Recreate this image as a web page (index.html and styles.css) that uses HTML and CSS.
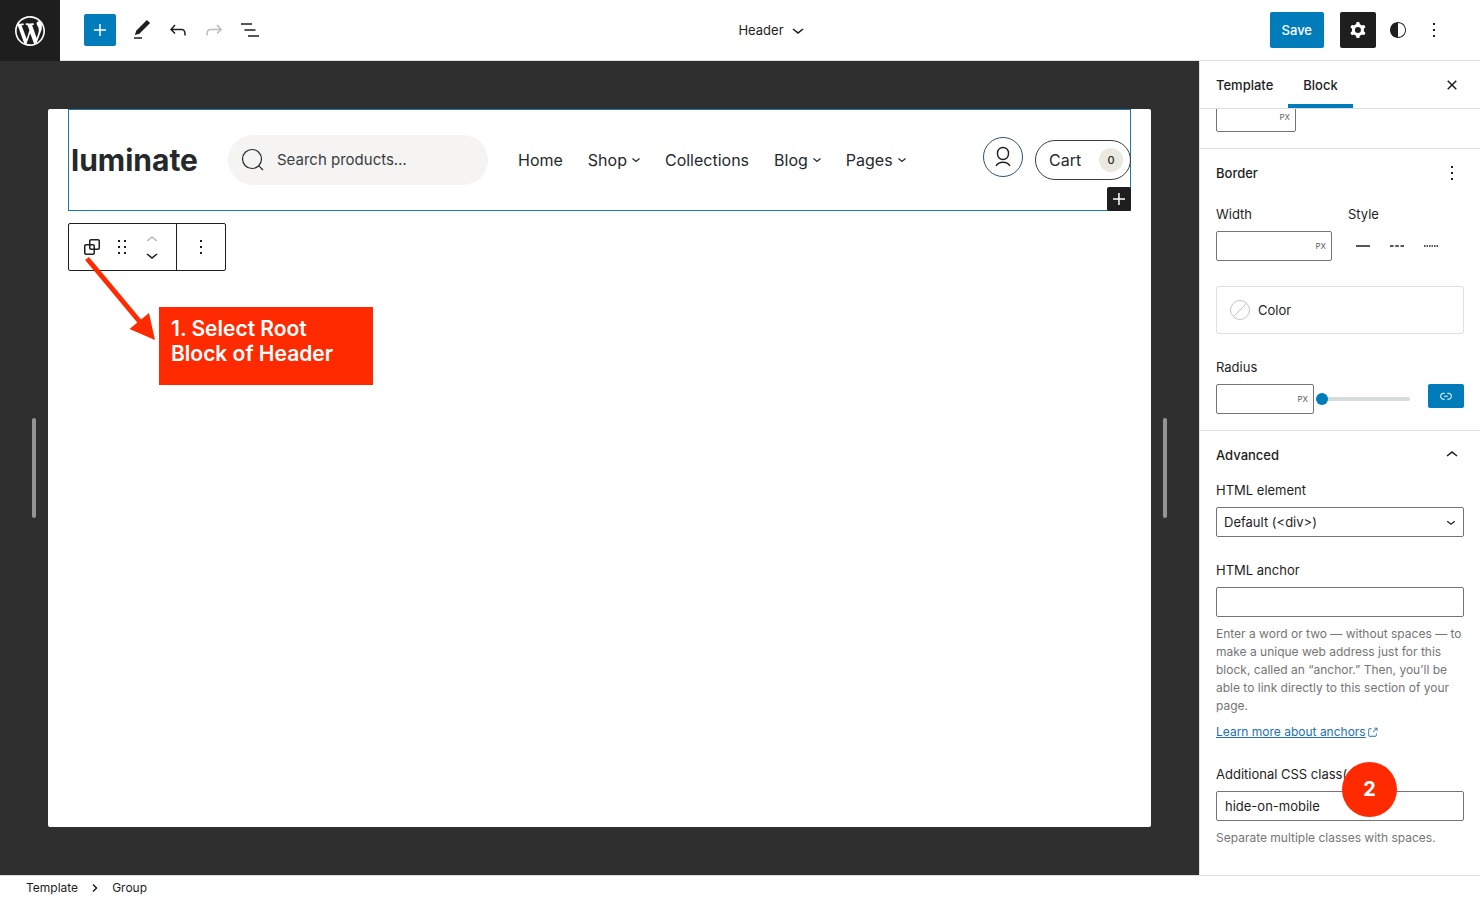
FILE: index.html
```html
<!DOCTYPE html>
<html lang="en">

<head>
    <meta charset="utf-8">
    <title>Header</title>
    <link rel="stylesheet" href="styles.css">
</head>

<body>
    <header class="topbar">
        <a class="site-logo" href="#" aria-label="WordPress">
            <svg width="36" height="36" viewBox="-2 -2 24 24"><path d="M20 10c0-5.51-4.49-10-10-10C4.48 0 0 4.49 0 10c0 5.52 4.48 10 10 10 5.51 0 10-4.48 10-10zM7.78 15.37L4.37 6.22c.55-.02 1.17-.08 1.17-.08.5-.06.44-1.13-.06-1.11 0 0-1.45.11-2.37.11-.18 0-.37 0-.58-.01C4.12 2.69 6.87 1.11 10 1.11c2.33 0 4.45.87 6.05 2.34-.68-.11-1.65.39-1.65 1.58 0 .74.45 1.36.9 2.1.35.61.55 1.36.55 2.46 0 1.49-1.4 5-1.4 5l-3.03-8.37c.54-.02.82-.17.82-.17.5-.05.44-1.25-.06-1.22 0 0-1.44.12-2.38.12-.87 0-2.33-.12-2.33-.12-.5-.03-.56 1.2-.06 1.22l.92.08 1.26 3.41zM17.41 10c.24-.64.74-1.87.43-4.25.7 1.29 1.05 2.71 1.05 4.25 0 3.29-1.73 6.24-4.4 7.78.97-2.59 1.94-5.2 2.92-7.78zM6.1 18.09C3.12 16.65 1.11 13.53 1.11 10c0-1.3.23-2.48.72-3.59C3.25 10.3 4.67 14.2 6.1 18.09zm4.03-6.63l2.58 6.98c-.86.29-1.76.45-2.71.45-.79 0-1.57-.11-2.29-.33.81-2.38 1.62-4.74 2.42-7.1z"/></svg>
        </a>
        <div class="topbar-inner">
            <div class="tools">
                <button class="inserter" aria-label="Add block">
                    <svg class="icon" viewBox="0 0 24 24"><path d="M11.2 12.8V18h1.5v-5.2H18v-1.5h-5.3V6h-1.5v5.3H6v1.5z"/></svg>
                </button>
                <button class="tool" aria-label="Tools">
                    <svg class="icon" viewBox="0 0 24 24"><path d="M20.1 5.1L16.9 2 6.2 12.7l-1.3 4.4 4.5-1.3L20.1 5.1zM4 20.8h8v-1.5H4v1.5z"/></svg>
                </button>
                <button class="tool" aria-label="Undo">
                    <svg class="icon" viewBox="0 0 24 24"><path d="M18.3 11.7c-.6-.6-1.4-.9-2.3-.9H6.7l2.9-3.3-1.1-1-4.5 5L8.5 16l1-1-2.7-2.7H16c.5 0 .9.2 1.3.5 1 1 1 3.4 1 4.5v.3h1.5v-.2c0-1.5 0-4.3-1.5-5.7z"/></svg>
                </button>
                <button class="tool" aria-label="Redo" disabled>
                    <svg class="icon" viewBox="0 0 24 24"><path d="M15.6 6.5l-1.1 1 2.9 3.3H8c-.9 0-1.7.3-2.3.9-1.4 1.5-1.4 4.2-1.4 5.6v.2h1.5v-.3c0-1.1 0-3.5 1-4.5.3-.3.7-.5 1.3-.5h9.2L14.5 15l1.1 1.1 4.6-4.6-4.6-5z"/></svg>
                </button>
                <button class="tool" aria-label="List view">
                    <svg class="icon" viewBox="0 0 24 24"><path d="M3 5.3h11v1.5H3V5.3zm3.5 6h11v1.5h-11v-1.5zM21 17.3H10v1.5h11v-1.5z"/></svg>
                </button>
            </div>
            <button class="document-title">
                Header
                <svg class="icon" viewBox="0 0 24 24"><path d="M17.5 11.6L12 16l-5.5-4.4.9-1.2L12 14l4.5-3.6 1 1.2z"/></svg>
            </button>
            <div class="actions">
                <button class="save">Save</button>
                <button class="tool active" aria-label="Settings">
                    <svg class="icon" viewBox="0 0 24 24"><path fill-rule="evenodd" d="M10.289 4.836A1 1 0 0111.275 4h1.306a1 1 0 01.987.836l.244 1.466c.787.26 1.503.679 2.108 1.218l1.393-.522a1 1 0 011.216.437l.653 1.13a1 1 0 01-.23 1.273l-1.148.944a6.025 6.025 0 010 2.435l1.149.946a1 1 0 01.23 1.272l-.653 1.13a1 1 0 01-1.216.437l-1.394-.522c-.605.54-1.32.958-2.108 1.218l-.244 1.466a1 1 0 01-.987.836h-1.306a1 1 0 01-.986-.836l-.244-1.466a5.995 5.995 0 01-2.108-1.218l-1.394.522a1 1 0 01-1.217-.436l-.653-1.131a1 1 0 01.23-1.272l1.149-.946a6.026 6.026 0 010-2.435l-1.148-.944a1 1 0 01-.23-1.272l.653-1.131a1 1 0 011.217-.437l1.393.522a5.994 5.994 0 012.108-1.218l.244-1.466zM14.929 12a3 3 0 11-6 0 3 3 0 016 0z"/></svg>
                </button>
                <button class="tool styles" aria-label="Styles">
                    <svg class="icon" viewBox="0 0 24 24"><path d="M12 4c-4.4 0-8 3.6-8 8s3.6 8 8 8 8-3.6 8-8-3.6-8-8-8zm0 15V5c3.9 0 7 3.1 7 7s-3.1 7-7 7z"/></svg>
                </button>
                <button class="tool" aria-label="Options">
                    <svg class="icon" viewBox="0 0 24 24"><path d="M13 19h-2v-2h2v2zm0-6h-2v-2h2v2zm0-6h-2V5h2v2z"/></svg>
                </button>
            </div>
        </div>
    </header>

    <main class="editor">
        <section class="canvas">
            <div class="handle"></div>
            <div class="frame">
                <div class="header-block">
                    <div class="brand">luminate</div>
                    <label class="search">
                        <svg width="24" height="24" viewBox="0 0 24 24"><circle cx="11" cy="11" r="9.5"/><path d="M17.8 17.8L22 22"/></svg>
                        <input type="search" placeholder="Search products…" aria-label="Search products">
                    </label>
                    <nav class="menu">
                        <a href="#">Home</a>
                        <a href="#">Shop <svg width="8" height="8" viewBox="0 0 8 8"><path d="M0.5 2.5L4 5.5l3.5-3"/></svg></a>
                        <a href="#">Collections</a>
                        <a href="#">Blog <svg width="8" height="8" viewBox="0 0 8 8"><path d="M0.5 2.5L4 5.5l3.5-3"/></svg></a>
                        <a href="#">Pages <svg width="8" height="8" viewBox="0 0 8 8"><path d="M0.5 2.5L4 5.5l3.5-3"/></svg></a>
                    </nav>
                    <div class="account-wrap">
                        <a class="account" href="#" aria-label="Account">
                            <svg width="20" height="22" viewBox="0 0 20 22"><rect x="4.5" y="1.5" width="11" height="12" rx="5.5"/><path d="M3 20c1.5-2.5 4-3.8 7-3.8s5.5 1.3 7 3.8"/></svg>
                        </a>
                    </div>
                    <button class="cart">Cart <span class="count">0</span></button>
                    <button class="appender" aria-label="Add block">
                        <svg class="icon" viewBox="0 0 24 24"><path d="M11.2 12.8V18h1.5v-5.2H18v-1.5h-5.3V6h-1.5v5.3H6v1.5z"/></svg>
                    </button>
                </div>

                <div class="block-toolbar">
                    <div class="toolbar-group">
                        <button aria-label="Group">
                            <svg class="icon" viewBox="0 0 24 24"><path d="M18 4h-7c-1.1 0-2 .9-2 2v3H6c-1.1 0-2 .9-2 2v7c0 1.1.9 2 2 2h7c1.1 0 2-.9 2-2v-3h3c1.1 0 2-.9 2-2V6c0-1.1-.9-2-2-2zm-4.5 14c0 .3-.2.5-.5.5H6c-.3 0-.5-.2-.5-.5v-7c0-.3.2-.5.5-.5h3V13c0 1.1.9 2 2 2h2.5v3zm0-4.5H11c-.3 0-.5-.2-.5-.5v-2.5H13c.3 0 .5.2.5.5v2.5zm5-.5c0 .3-.2.5-.5.5h-3V11c0-1.1-.9-2-2-2h-2.5V6c0-.3.2-.5.5-.5h7c.3 0 .5.2.5.5v7z"/></svg>
                        </button>
                        <button aria-label="Drag">
                            <svg class="icon" viewBox="0 0 24 24"><path d="M8 7h2V5H8v2zm0 6h2v-2H8v2zm0 6h2v-2H8v2zm6-14v2h2V5h-2zm0 8h2v-2h-2v2zm0 6h2v-2h-2v2z"/></svg>
                        </button>
                        <div class="movers">
                            <button aria-label="Move up" disabled>
                                <svg class="icon" viewBox="0 0 24 24"><path d="M6.5 12.4L12 8l5.5 4.4-.9 1.2L12 10l-4.5 3.6-1-1.2z"/></svg>
                            </button>
                            <button aria-label="Move down">
                                <svg class="icon" viewBox="0 0 24 24"><path d="M17.5 11.6L12 16l-5.5-4.4.9-1.2L12 14l4.5-3.6 1 1.2z"/></svg>
                            </button>
                        </div>
                    </div>
                    <div class="toolbar-group">
                        <button aria-label="Options">
                            <svg class="icon" viewBox="0 0 24 24"><path d="M13 19h-2v-2h2v2zm0-6h-2v-2h2v2zm0-6h-2V5h2v2z"/></svg>
                        </button>
                    </div>
                </div>

                <!-- annotation: arrow from the group icon to the note -->
                <svg class="arrow" width="80" height="94" viewBox="0 0 80 94"><path class="shaft" d="M7 8.5L60 72"/><path d="M69 63L75 90 49.5 79z"/></svg>
                <div class="note">1. Select Root<br>Block of Header</div>
            </div>
            <div class="handle"></div>
        </section>

        <aside class="sidebar">
            <div class="tabs">
                <button class="tab">Template</button>
                <button class="tab current">Block</button>
                <button class="close" aria-label="Close settings">
                    <svg class="icon" viewBox="0 0 24 24"><path d="M12 13.06l3.712 3.713 1.061-1.06L13.061 12l3.712-3.712-1.06-1.06L12 10.938 8.288 7.227l-1.061 1.06L10.939 12l-3.712 3.712 1.06 1.061L12 13.061z"/></svg>
                </button>
            </div>

            <div class="panels">
                <div class="panel scrolled">
                    <div class="unit-input gap-input">
                        <input type="text" aria-label="Block spacing">
                        <span>PX</span>
                    </div>
                </div>

                <div class="panel">
                    <div class="panel-title border-title">
                        <h2>Border</h2>
                        <button aria-label="Border options">
                            <svg class="icon" viewBox="0 0 24 24"><path d="M13 19h-2v-2h2v2zm0-6h-2v-2h2v2zm0-6h-2V5h2v2z"/></svg>
                        </button>
                    </div>
                    <div class="columns">
                        <div class="field">
                            <label for="border-width">Width</label>
                            <div class="unit-input">
                                <input type="text" id="border-width">
                                <span>PX</span>
                            </div>
                        </div>
                        <div class="field">
                            <span class="label">Style</span>
                            <div class="line-styles">
                                <button aria-label="Solid"><svg width="14" height="2" viewBox="0 0 14 2"><path d="M0 1h14"/></svg></button>
                                <button aria-label="Dashed"><svg width="14" height="2" viewBox="0 0 14 2"><path stroke-dasharray="3.5 1.75" d="M0 1h14"/></svg></button>
                                <button aria-label="Dotted"><svg width="14" height="2" viewBox="0 0 14 2"><path stroke-dasharray="1.5 1" d="M0 1h14"/></svg></button>
                            </div>
                        </div>
                    </div>
                    <button class="color">
                        <svg width="20" height="20" viewBox="0 0 20 20"><circle cx="10" cy="10" r="9.5"/><path d="M3.5 16.5l13-13"/></svg>
                        Color
                    </button>
                    <div class="field">
                        <label for="radius">Radius</label>
                        <div class="radius-row">
                            <div class="unit-input radius-input">
                                <input type="text" id="radius">
                                <span>PX</span>
                            </div>
                            <input class="slider" type="range" min="0" max="100" value="0" aria-label="Border radius">
                            <button class="link-sides" aria-label="Unlink radii">
                                <svg width="16" height="16" viewBox="0 0 24 24"><path d="M15.6 7.2H14v1.5h1.6c2 0 3.7 1.7 3.7 3.7s-1.7 3.7-3.7 3.7H14v1.5h1.6c2.8 0 5.2-2.3 5.2-5.2 0-2.9-2.3-5.2-5.2-5.2zM4.7 12.4c0-2 1.7-3.7 3.7-3.7H10V7.2H8.4c-2.9 0-5.2 2.3-5.2 5.2 0 2.9 2.3 5.2 5.2 5.2H10v-1.5H8.4c-2 0-3.7-1.7-3.7-3.7zm4.6.9h5.3v-1.5H9.3v1.5z"/></svg>
                            </button>
                        </div>
                    </div>
                </div>

                <div class="panel">
                    <div class="panel-title">
                        <h2>Advanced</h2>
                        <button aria-label="Collapse">
                            <svg class="icon" viewBox="0 0 24 24"><path d="M6.5 12.4L12 8l5.5 4.4-.9 1.2L12 10l-4.5 3.6-1-1.2z"/></svg>
                        </button>
                    </div>
                    <div class="field">
                        <label for="element">HTML element</label>
                        <div class="select">
                            <select id="element">
                                <option>Default (&lt;div&gt;)</option>
                            </select>
                            <svg width="18" height="18" viewBox="0 0 24 24"><path d="M17.5 11.6L12 16l-5.5-4.4.9-1.2L12 14l4.5-3.6 1 1.2z"/></svg>
                        </div>
                    </div>
                    <div class="field">
                        <label for="anchor">HTML anchor</label>
                        <input type="text" id="anchor">
                        <p class="help">Enter a word or two — without spaces — to make a unique web address just for this block, called an “anchor.” Then, you’ll be able to link directly to this section of your page.</p>
                        <a class="help-link" href="#"><span>Learn more about anchors</span><svg width="13" height="13" viewBox="0 0 24 24"><path d="M18.2 17c0 .7-.6 1.2-1.2 1.2H7c-.7 0-1.2-.6-1.2-1.2V7c0-.7.6-1.2 1.2-1.2h3.2V4.2H7C5.5 4.2 4.2 5.5 4.2 7v10c0 1.5 1.2 2.8 2.8 2.8h10c1.5 0 2.8-1.2 2.8-2.8v-3.6h-1.5V17zM14.9 3v1.5h3.7l-6.4 6.4 1.1 1.1 6.4-6.4v3.7h1.5V3h-6.3z"/></svg></a>
                    </div>
                    <div class="field">
                        <label for="css-class">Additional CSS class(es)</label>
                        <input type="text" id="css-class" value="hide-on-mobile">
                        <p class="help">Separate multiple classes with spaces.</p>
                        <span class="step">2</span>
                    </div>
                </div>
            </div>
        </aside>
    </main>

    <footer class="breadcrumb">
        <button>Template</button>
        <svg width="6" height="8" viewBox="0 0 6 8"><path d="M1 0.5L4.5 4 1 7.5"/></svg>
        <button>Group</button>
    </footer>
</body>

</html>
```
FILE: styles.css
```css
* {
    box-sizing: border-box;
}

body {
    margin: 0;
    height: 100vh;
    display: flex;
    flex-direction: column;
    overflow: hidden;
    background: #fff;
    color: #1e1e1e;
    font-family: Inter, "Liberation Sans", sans-serif;
    font-size: 13px;
    line-height: 18px;
}

button,
input,
select {
    font: inherit;
    color: inherit;
}

button {
    display: flex;
    align-items: center;
    justify-content: center;
    padding: 0;
    border: none;
    background: none;
    cursor: pointer;
}

svg {
    display: block;
    flex: none;
    fill: currentColor;
}

.icon {
    width: 24px;
    height: 24px;
}

/* top bar */

.topbar {
    display: flex;
    height: 61px;
    flex: none;
    border-bottom: 1px solid #e0e0e0;
}

.site-logo {
    display: flex;
    align-items: center;
    justify-content: center;
    width: 60px;
    height: 61px;
    background: #1e1e1e;
    color: #fff;
}

.topbar-inner {
    flex: 1;
    display: grid;
    grid-template-columns: 1fr auto 1fr;
    align-items: center;
    padding: 0 28px 0 24px;
}

.tools,
.actions {
    display: flex;
    align-items: center;
}

.actions {
    justify-content: flex-end;
}

.inserter {
    width: 32px;
    height: 32px;
    margin-right: 8px;
    border-radius: 2px;
    background: #007cba;
    color: #fff;
}

.tool {
    width: 36px;
    height: 36px;
    border-radius: 2px;
}

.tool:disabled {
    color: #bbb;
}

.tool.active {
    background: #1e1e1e;
    color: #fff;
}

.tool.styles {
    margin-left: 4px;
}

.document-title {
    gap: 2px;
    padding-left: 12px;
}

.save {
    height: 36px;
    padding: 0 12px;
    margin-right: 16px;
    border-radius: 2px;
    background: #007cba;
    color: #fff;
    font-weight: 500;
}

/* canvas */

.editor {
    flex: 1;
    min-height: 0;
    display: flex;
}

.canvas {
    flex: 1;
    min-width: 0;
    display: flex;
    align-items: center;
    gap: 12px;
    padding: 48px 32px;
    background: #2f2f2f;
}

.handle {
    width: 4px;
    height: 100px;
    border-radius: 2px;
    background: #949494;
}

.frame {
    position: relative;
    flex: 1;
    min-width: 0;
    height: 100%;
    padding: 0 20px;
    border-radius: 2px;
    background: #fff;
}

.header-block {
    position: relative;
    display: flex;
    align-items: center;
    height: 102px;
    border: 1px solid #1f76a8;
    color: #25292c;
    font-size: 16px;
    line-height: 24px;
}

.brand {
    display: flex;
    justify-content: flex-end;
    width: 129px;
    margin-right: 30px;
    font-size: 30px;
    font-weight: 700;
    line-height: 40px;
}

.search {
    display: flex;
    align-items: center;
    width: 260px;
    height: 50px;
    margin-right: 30px;
    padding: 0 13px;
    border-radius: 25px;
    background: #f5f4f3;
}

.search svg {
    fill: none;
    stroke: #25292c;
    stroke-width: 1.2;
}

.search input {
    flex: 1;
    min-width: 0;
    margin-left: 12px;
    padding: 0;
    border: none;
    outline: none;
    background: none;
    font-size: 15px;
}

.search input::placeholder {
    color: #3a3d40;
    opacity: 1;
}

.menu {
    flex: 1;
    display: flex;
    gap: 25px;
}

.menu a {
    display: flex;
    align-items: center;
    gap: 5px;
    color: inherit;
    text-decoration: none;
}

.menu svg {
    fill: none;
    stroke: currentColor;
    stroke-width: 1.3;
}

.account-wrap {
    padding-bottom: 7px;
    margin-right: 12px;
}

.account {
    display: flex;
    align-items: center;
    justify-content: center;
    width: 40px;
    height: 40px;
    border: 1px solid #2c5370;
    border-radius: 50%;
}

.account svg {
    fill: none;
    stroke: #1e1e1e;
    stroke-width: 1.4;
}

.cart {
    justify-content: space-between;
    width: 96px;
    height: 40px;
    margin-right: -1px;
    padding: 0 7px 0 13px;
    border: 1px solid #3a3d40;
    border-radius: 20px;
}

.count {
    width: 24px;
    height: 24px;
    border-radius: 50%;
    background: #ebe8df;
    font-size: 11px;
    font-weight: 500;
}

.appender {
    position: absolute;
    right: -1px;
    bottom: -1px;
    width: 24px;
    height: 24px;
    border-radius: 2px;
    background: #1e1e1e;
    color: #fff;
}

.block-toolbar {
    display: inline-flex;
    height: 48px;
    margin-top: 12px;
    border: 1px solid #1e1e1e;
    border-radius: 2px;
}

.toolbar-group {
    display: flex;
    align-items: center;
    padding: 0 12px 0 11px;
}

.toolbar-group + .toolbar-group {
    border-left: 1px solid #1e1e1e;
    padding: 0 12px;
}

.toolbar-group button {
    margin-right: 6px;
}

.toolbar-group + .toolbar-group button {
    margin: 0;
}

.movers {
    display: flex;
    flex-direction: column;
}

.movers button {
    height: 15px;
    margin: 0;
}

.movers button:disabled {
    color: #bbb;
}

.arrow {
    position: absolute;
    left: 32px;
    top: 141px;
    fill: #ff2a00;
}

.shaft {
    fill: none;
    stroke: #ff2a00;
    stroke-width: 5;
}

.note {
    position: absolute;
    left: 111px;
    top: 198px;
    width: 214px;
    height: 78px;
    padding: 9px 12px;
    background: #ff2a00;
    color: #fff;
    font-size: 21px;
    font-weight: 600;
    line-height: 25px;
}

/* sidebar */

.sidebar {
    display: flex;
    flex-direction: column;
    width: 281px;
    border-left: 1px solid #e0e0e0;
    background: #fff;
}

.tabs {
    display: flex;
    height: 48px;
    flex: none;
    padding-left: 1px;
    border-bottom: 1px solid #ddd;
}

.tab {
    height: 47px;
    padding: 0 15px;
    font-weight: 500;
}

.tab.current {
    box-shadow: inset 0 -4px #007cba;
}

.close {
    margin-left: auto;
    margin-right: 16px;
}

.panels {
    flex: 1;
    min-height: 0;
    overflow: hidden;
}

.panel {
    padding: 15px 16px 16px;
    border-top: 1px solid #e0e0e0;
}

/* first panel is scrolled under the tabs */
.panel.scrolled {
    margin-top: -7px;
    padding-top: 0;
    border-top: none;
}

.panel-title {
    display: flex;
    align-items: center;
    justify-content: space-between;
    height: 18px;
    margin-bottom: 17px;
}

.border-title {
    margin-bottom: 23px;
}

.panel-title h2 {
    margin: 0;
    font-size: 13px;
    font-weight: 500;
}

.columns {
    display: grid;
    grid-template-columns: 1fr 1fr;
    gap: 16px;
}

.field {
    position: relative;
    display: flex;
    flex-direction: column;
    gap: 8px;
}

.field + .field {
    margin-top: 24px;
}

.columns .field {
    margin: 0;
}

.field input[type="text"],
.unit-input,
select {
    width: 100%;
    height: 30px;
    padding: 0 8px;
    border: 1px solid #757575;
    border-radius: 2px;
    background: #fff;
}

.unit-input {
    display: flex;
    align-items: center;
}

.unit-input input[type="text"] {
    flex: 1;
    width: 0;
    min-width: 0;
    height: 28px;
    padding: 0;
    border: none;
}

.unit-input span {
    margin-right: -3px;
    color: #5c5c5c;
    font-size: 8px;
}

.gap-input {
    width: 80px;
}

.line-styles {
    display: flex;
    gap: 4px;
}

.line-styles button {
    width: 30px;
    height: 30px;
}

.line-styles svg {
    stroke: #1e1e1e;
    stroke-width: 1.5;
}

.color {
    justify-content: flex-start;
    gap: 8px;
    width: 100%;
    height: 48px;
    margin: 25px 0 24px;
    padding: 0 13px;
    border: 1px solid #e0e0e0;
    border-radius: 2px;
}

.color svg {
    fill: none;
    stroke: #c4c4c4;
}

.radius-row {
    display: flex;
}

.radius-input {
    width: 98px;
}

.slider {
    flex: 1;
    min-width: 0;
    height: 30px;
    margin: 0 18px 0 2px;
    appearance: none;
    background: none;
}

.slider::-webkit-slider-runnable-track {
    height: 4px;
    border-radius: 2px;
    background: #d5dadd;
}

.slider::-webkit-slider-thumb {
    appearance: none;
    width: 12px;
    height: 12px;
    margin-top: -4px;
    border-radius: 50%;
    background: #007cba;
}

.link-sides {
    width: 36px;
    height: 24px;
    border-radius: 2px;
    background: #007cba;
    color: #fff;
}

.select {
    position: relative;
}

.select select {
    display: block;
    padding: 0 7px;
    appearance: none;
}

.select svg {
    position: absolute;
    right: 4px;
    top: 6px;
    pointer-events: none;
}

.help {
    margin: 0;
    color: #757575;
    font-size: 12px;
}

.help-link {
    display: flex;
    align-items: center;
    color: #2271b1;
    font-size: 12px;
    text-decoration: none;
}

.help-link span {
    text-decoration: underline;
}

.step {
    position: absolute;
    top: -3px;
    right: 67px;
    width: 55px;
    height: 55px;
    border-radius: 50%;
    background: #ff2a00;
    color: #fff;
    font-size: 20px;
    font-weight: 700;
    line-height: 55px;
    text-align: center;
}

/* footer */

.breadcrumb {
    display: flex;
    align-items: center;
    gap: 14px;
    height: 25px;
    flex: none;
    padding: 0 26px;
    border-top: 1px solid #ddd;
    font-size: 12px;
}

.breadcrumb svg {
    fill: none;
    stroke: #1e1e1e;
    stroke-width: 1.5;
}
```
